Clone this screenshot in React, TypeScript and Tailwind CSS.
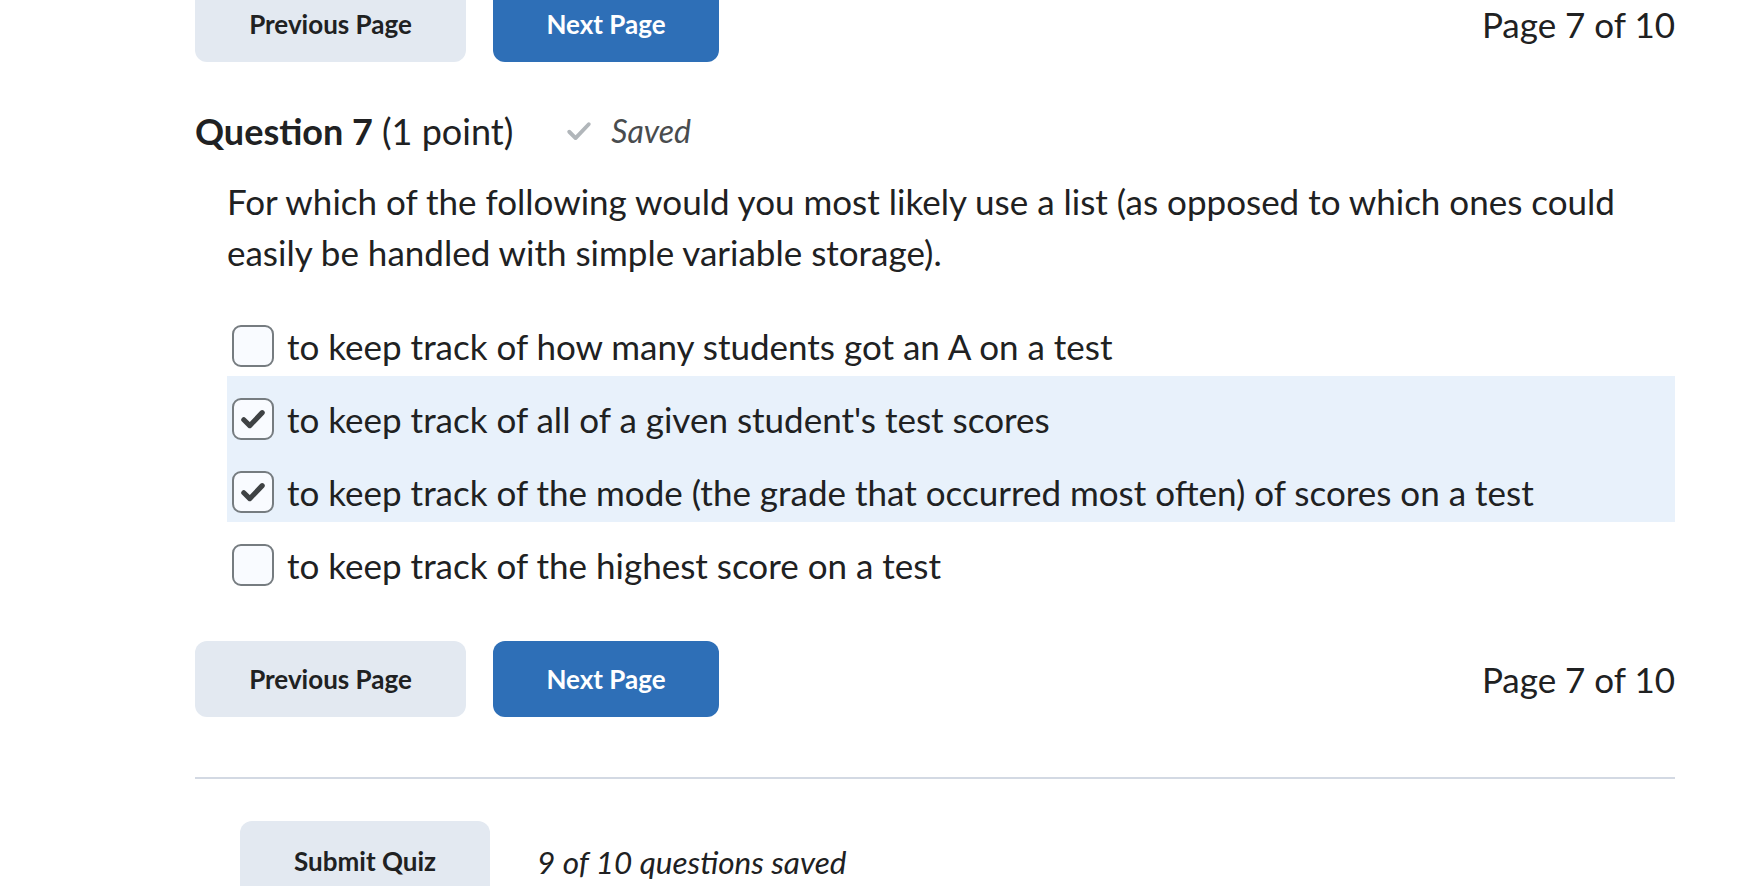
import React from 'react';

const options = [
  { label: 'to keep track of how many students got an A on a test', checked: false },
  { label: "to keep track of all of a given student's test scores", checked: true },
  { label: 'to keep track of the mode (the grade that occurred most often) of scores on a test', checked: true },
  { label: 'to keep track of the highest score on a test', checked: false },
];

const CheckMark: React.FC<{ className?: string; width?: number }> = ({ className, width = 3.4 }) => (
  <svg viewBox="0 0 24 24" className={className} fill="none" stroke="currentColor" strokeWidth={width} strokeLinecap="round" strokeLinejoin="round">
    <path d="M5.5 12.5l4.2 4.2L18.5 7.5" />
  </svg>
);

const PageNav: React.FC<{ className?: string }> = ({ className = '' }) => (
  <div className={`flex items-center justify-between ${className}`}>
    <div className="flex items-center gap-[27px]">
      <button className="h-[76px] w-[271px] rounded-[12px] bg-[#e3e9f1] text-[26px] font-bold text-[#202122]">
        Previous Page
      </button>
      <button className="h-[76px] w-[226px] rounded-[12px] bg-[#2e6fb7] text-[26px] font-bold text-white">
        Next Page
      </button>
    </div>
    <div className="text-[35px] text-[#202122]">Page 7 of 10</div>
  </div>
);

const Checkbox: React.FC<{ checked: boolean }> = ({ checked }) => (
  <span className="flex h-[42px] w-[42px] shrink-0 items-center justify-center rounded-[9px] border-2 border-[#767c80] bg-[#f9fbff] text-[#3f4244]">
    {checked && <CheckMark className="h-[34px] w-[34px]" width={3.6} />}
  </span>
);

export default function App() {
  return (
    <div className="h-[886px] overflow-hidden bg-white font-['Lato',sans-serif] text-[#202122]">
      <div className="ml-[195px] w-[1480px]">
        <PageNav className="-mt-[14px]" />

        <div className="mt-[46px] flex items-center text-[36px] leading-[46px]">
          <h2 className="font-bold">Question 7</h2>
          <span className="ml-[9px]">(1 point)</span>
          <span className="ml-[48px] flex items-center gap-[14px] text-[32px] italic text-[#494c4e]">
            <CheckMark className="h-[36px] w-[36px] text-[#b1b6ba]" width={2.6} />
            Saved
          </span>
        </div>

        <p className="mt-[22px] pl-[32px] pr-[30px] text-[35px] leading-[50.5px]">
          For which of the following would you most likely use a list (as opposed to which ones could easily be handled with simple variable storage).
        </p>

        <div className="ml-[32px] mt-[26px]">
          {options.map((o) => (
            <label
              key={o.label}
              className={`flex items-center gap-[13px] pb-[4.5px] pl-[5px] pt-[18px] text-[35px] leading-[50.5px] ${o.checked ? 'bg-[#e8f1fb]' : ''}`}
            >
              <Checkbox checked={o.checked} />
              <span>{o.label}</span>
            </label>
          ))}
        </div>

        <PageNav className="mt-[46px]" />

        <hr className="mt-[60px] border-t-2 border-[#d3d9e3]" />

        <div className="mt-[42px] flex items-center pl-[45px]">
          <button className="h-[80px] w-[250px] rounded-[12px] bg-[#e3e9f1] text-[26px] font-bold text-[#202122]">
            Submit Quiz
          </button>
          <span className="ml-[47px] mt-[4px] text-[31.5px] italic">9 of 10 questions saved</span>
        </div>
      </div>
    </div>
  );
}
